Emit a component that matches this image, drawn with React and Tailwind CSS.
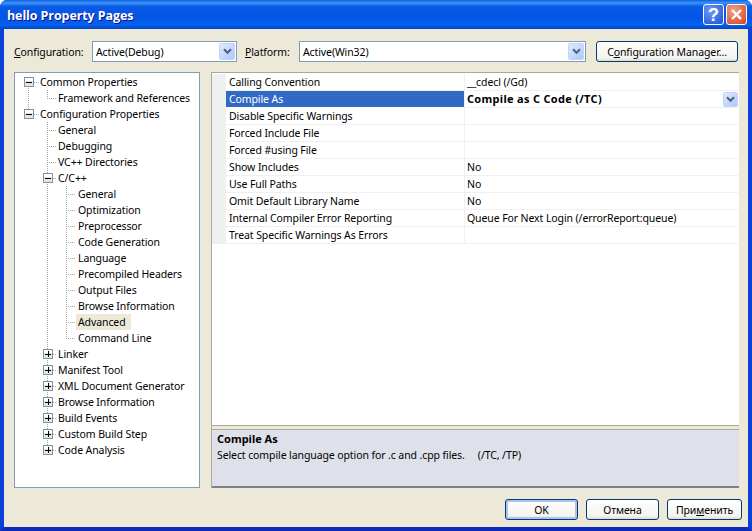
const tree = [
  { label: 'Common Properties', level: 0, box: 'minus', trunk: 'down' },
  { label: 'Framework and References', level: 1, l1: 'last', l0: true },
  { label: 'Configuration Properties', level: 0, box: 'minus', trunk: 'up', kids: true },
  { label: 'General', level: 1, l1: 'mid' },
  { label: 'Debugging', level: 1, l1: 'mid' },
  { label: 'VC++ Directories', level: 1, l1: 'mid' },
  { label: 'C/C++', level: 1, l1: 'mid', box: 'minus', kids: true },
  { label: 'General', level: 2, l2: 'mid' },
  { label: 'Optimization', level: 2, l2: 'mid' },
  { label: 'Preprocessor', level: 2, l2: 'mid' },
  { label: 'Code Generation', level: 2, l2: 'mid' },
  { label: 'Language', level: 2, l2: 'mid' },
  { label: 'Precompiled Headers', level: 2, l2: 'mid' },
  { label: 'Output Files', level: 2, l2: 'mid' },
  { label: 'Browse Information', level: 2, l2: 'mid' },
  { label: 'Advanced', level: 2, l2: 'mid', selected: true },
  { label: 'Command Line', level: 2, l2: 'last' },
  { label: 'Linker', level: 1, l1: 'mid', box: 'plus' },
  { label: 'Manifest Tool', level: 1, l1: 'mid', box: 'plus' },
  { label: 'XML Document Generator', level: 1, l1: 'mid', box: 'plus' },
  { label: 'Browse Information', level: 1, l1: 'mid', box: 'plus' },
  { label: 'Build Events', level: 1, l1: 'mid', box: 'plus' },
  { label: 'Custom Build Step', level: 1, l1: 'mid', box: 'plus' },
  { label: 'Code Analysis', level: 1, l1: 'last', box: 'plus' },
];

const props = [
  ['Calling Convention', '__cdecl (/Gd)'],
  ['Compile As', 'Compile as C Code (/TC)', true],
  ['Disable Specific Warnings', ''],
  ['Forced Include File', ''],
  ['Forced #using File', ''],
  ['Show Includes', 'No'],
  ['Use Full Paths', 'No'],
  ['Omit Default Library Name', 'No'],
  ['Internal Compiler Error Reporting', 'Queue For Next Login (/errorReport:queue)'],
  ['Treat Specific Warnings As Errors', ''],
];

const DOT = '#a8a8a0';

function Expander({ x, kind }) {
  return (
    <g shapeRendering="crispEdges">
      <rect x={x + 0.5} y={3.5} width={9} height={9} fill="#e6e6dc" stroke="#7a94b0" />
      <rect x={x + 1} y={4} width={8} height={3} fill="#ffffff" />
      <rect x={x + 2} y={7.5} width={6} height={1} fill="#000000" />
      {kind === 'plus' && <rect x={x + 4.5} y={5} width={1} height={6} fill="#000000" />}
    </g>
  );
}

function Guides({ item }) {
  const width = [25, 43, 63][item.level];
  const v = (x, y1, y2) => (
    <line x1={x + 0.5} x2={x + 0.5} y1={y1} y2={y2} stroke={DOT} strokeDasharray="1 1" shapeRendering="crispEdges" />
  );
  const h = (x1, x2) => (
    <line x1={x1} x2={x2} y1={8.5} y2={8.5} stroke={DOT} strokeDasharray="1 1" shapeRendering="crispEdges" />
  );
  return (
    <svg width={width} height={16} className="shrink-0">
      {item.level === 0 && item.trunk === 'down' && v(13, 8, 16)}
      {item.level === 0 && item.trunk === 'up' && v(13, 0, 8)}
      {item.level === 0 && item.kids && v(32, 12, 16)}
      {item.level === 0 && h(19, 24)}
      {item.l0 && v(13, 0, 16)}
      {item.level === 1 && v(32, 0, item.l1 === 'last' ? 8 : 16)}
      {item.level === 1 && h(32, 42)}
      {item.level === 1 && item.kids && v(51, 12, 16)}
      {item.level === 2 && v(32, 0, 16)}
      {item.level === 2 && v(51, 0, item.l2 === 'last' ? 8 : 16)}
      {item.level === 2 && h(51, 61)}
      {item.box && <Expander x={item.level === 0 ? 9 : 28} kind={item.box} />}
    </svg>
  );
}

function Chevron() {
  return (
    <svg width="9" height="7" viewBox="0 0 9 7">
      <path d="M1 1.2 L4.5 4.8 L8 1.2" fill="none" stroke="#4d6185" strokeWidth="2" />
    </svg>
  );
}

function ArrowBtn({ className = '' }) {
  return (
    <div className={`flex items-center justify-center rounded-[2px] border border-[#c3d3fd] bg-[linear-gradient(135deg,#e1eafe,#aec8f7)] ${className}`}>
      <Chevron />
    </div>
  );
}

function Combo({ value, className }) {
  return (
    <div className={`flex h-[21px] items-center justify-between border border-[#7f9db9] bg-white pr-[1px] pl-[3px] ${className}`}>
      <span>{value}</span>
      <ArrowBtn className="h-[17px] w-[16px]" />
    </div>
  );
}

function Btn({ children, className = '', active }) {
  return (
    <button className={`flex h-[21px] items-center justify-center rounded-[3px] border border-[#003c74] bg-[linear-gradient(180deg,#ffffff,#f4f3ee_85%,#dcd8ce)] text-black ${active ? 'shadow-[inset_0_0_0_2px_#a9c4ee]' : ''} ${className}`}>
      {children}
    </button>
  );
}

export default function App() {
  return (
    <div className="flex h-[531px] w-[752px] flex-col overflow-hidden rounded-t-[7px] bg-[#0831d9] font-['Noto_Sans',sans-serif] text-[10.5px] leading-[16px] tracking-[-0.1px] text-black">
      {/* Title bar */}
      <div className="flex h-[29px] shrink-0 items-center justify-between bg-[linear-gradient(180deg,#0a5fe8_0%,#3f94f5_10%,#0a5be6_22%,#0355e4_60%,#0461f0_85%,#0344c8_100%)] pr-[5px] pl-[7px]">
        <span className="pt-[2px] font-['Open_Sans',sans-serif] text-[12.5px] font-bold tracking-[-0.1px] text-white [text-shadow:1px_1px_#0f1089]">hello Property Pages</span>
        <div className="flex gap-[2px]">
          <div className="flex h-[21px] w-[21px] items-center justify-center rounded-[3px] border border-white bg-[radial-gradient(circle_at_35%_30%,#6d9cf5,#1d4fd8)] font-['Liberation_Sans',sans-serif] text-[18px] font-bold text-white">?</div>
          <div className="flex h-[21px] w-[21px] items-center justify-center rounded-[3px] border border-white bg-[radial-gradient(circle_at_35%_30%,#f0a48c,#d4401c)]">
            <svg width="13" height="13" viewBox="0 0 13 13">
              <path d="M2 2 L11 11 M11 2 L2 11" stroke="#ffffff" strokeWidth="2.4" />
            </svg>
          </div>
        </div>
      </div>

      {/* Dialog body */}
      <div className="flex min-h-0 flex-1 flex-col border-x-4 border-b-4 border-[#0a3fd8] border-b-[#0b2ab8] bg-[#ece9d8] pt-[12px] pr-[6px] pl-[10px]">
        <div className="flex h-[21px] items-center">
          <span className="w-[78px]"><u>C</u>onfiguration:</span>
          <Combo value="Active(Debug)" className="w-[145px]" />
          <span className="ml-[8px] w-[54px]"><u>P</u>latform:</span>
          <Combo value="Active(Win32)" className="w-[287px]" />
          <Btn className="ml-[10px] w-[142px]">C<u>o</u>nfiguration Manager...</Btn>
        </div>

        <div className="mt-[10px] flex h-[416px] pr-[3px]">
          {/* Tree */}
          <div className="w-[186px] shrink-0 border border-[#7f9db9] bg-white pt-[1px]">
            {tree.map((item, i) => (
              <div key={i} className="flex h-[16px] items-center whitespace-nowrap">
                <Guides item={item} />
                <span className={item.selected ? '-ml-[2px] w-[55px] bg-[#ece9d8] pl-[2px]' : ''}>{item.label}</span>
              </div>
            ))}
          </div>

          {/* Property grid and help */}
          <div className="ml-[11px] flex flex-1 flex-col border-t border-l border-[#aca899] bg-white pt-[1px]">
            <div className="flex-1 border-r border-white">
              {props.map(([name, value, selected], i) => (
                <div key={i} className="flex h-[17px] items-center whitespace-nowrap">
                  <div className="h-full w-[14px] shrink-0 bg-[#f0f0f0]" />
                  <div className={`flex h-full w-[238px] shrink-0 items-center border-b pl-[3px] ${selected ? 'border-white bg-[#316ac5] text-white' : 'border-[#f0f0f0]'}`}>{name}</div>
                  <div className={`flex h-full flex-1 items-center justify-between border-b border-l border-[#f0f0f0] pl-[2px] ${selected ? 'text-[11px] font-bold tracking-[0.3px]' : ''}`}>
                    <span>{value}</span>
                    {selected && <ArrowBtn className="h-[15px] w-[15px]" />}
                  </div>
                </div>
              ))}
            </div>
            <div className="h-[4px] border-t border-[#aca899] bg-[#ece9d8]" />
            <div className="h-[59px] border-t border-b-2 border-[#aca899] border-b-[#808080] bg-[#dee1e9] pt-[1px] pl-[5px]">
              <div className="text-[11px] font-bold tracking-normal">Compile As</div>
              <div>Select compile language option for .c and .cpp files.&nbsp;&nbsp;&nbsp;&nbsp; (/TC, /TP)</div>
            </div>
          </div>
        </div>

        <div className="mt-[11px] flex justify-end gap-[8px]">
          <Btn className="w-[73px]" active>OK</Btn>
          <Btn className="w-[73px]">Отмена</Btn>
          <Btn className="w-[75px]">При<u>м</u>енить</Btn>
        </div>
      </div>
    </div>
  );
}
